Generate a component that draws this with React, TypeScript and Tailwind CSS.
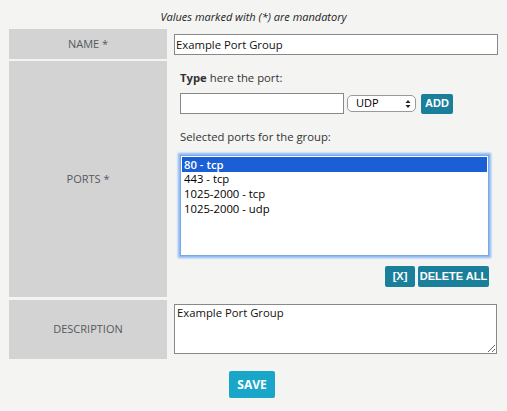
import React from 'react'

const ports = ['80 - tcp', '443 - tcp', '1025-2000 - tcp', '1025-2000 - udp']

function Label({ text, className }: { text: string; className: string }) {
  return (
    <div className={`flex items-center justify-center bg-[#d3d3d3] text-[11px] text-[#555a60] uppercase ${className}`}>
      {text}
    </div>
  )
}

export default function App() {
  return (
    <div className="min-h-[411px] w-[507px] bg-[#f4f4f3] font-['Open_Sans',sans-serif] text-[11.3px] text-[#222]">
      <p className="pt-[9px] h-[29px] text-center text-[11px] italic text-[#222]">
        Values marked with (*) are mandatory
      </p>

      <div className="ml-[9px] w-[489px] grid grid-cols-[158px_1fr] gap-y-[2px]">
        {/* Name */}
        <Label text="NAME *" className="h-[30px]" />
        <div className="flex items-center pl-[7px]">
          <input
            defaultValue="Example Port Group"
            className="w-[324px] h-[21px] border border-[#888] bg-white px-[1px] text-[11.3px] text-[#111] outline-none"
          />
        </div>

        {/* Ports */}
        <Label text="PORTS *" className="h-[236px]" />
        <div className="pl-[13px] pt-[9px]">
          <p className="h-[22px] text-[11.3px] text-[#333]">
            <span className="font-bold">Type</span> here the port:
          </p>
          <div className="flex items-center mt-[1px] h-[21px]">
            <input className="w-[164px] h-[21px] border border-[#888] bg-white outline-none" />
            <div className="ml-[3px] w-[69px] h-[17px] flex items-center justify-between rounded-[5px] border border-[#999] bg-white pl-[8px] pr-[4px] text-[11px] text-black">
              <span>UDP</span>
              <svg width="6" height="10" viewBox="0 0 6 10">
                <path d="M0.5 4 L3 1 L5.5 4 Z M0.5 6 L3 9 L5.5 6 Z" fill="#222" />
              </svg>
            </div>
            <button className="ml-[5px] w-[32px] h-[20px] rounded-[2px] bg-[#1a7f9b] font-['Liberation_Sans',sans-serif] text-[11px] font-bold text-white">
              ADD
            </button>
          </div>
          <p className="mt-[15px] h-[26px] text-[11.3px] text-[#333]">Selected ports for the group:</p>
          <div className="w-[309px] h-[101px] bg-white border border-[#7aa7e6] shadow-[0_0_2px_2px_#8ab8f5] pt-[1px] px-[1px]">
            {ports.map((p, i) => (
              <div
                key={p}
                className={`h-[14.7px] leading-[14px] pt-[0.5px] pl-[2px] text-[11.3px] ${
                  i === 0 ? 'bg-[#1a5fd6] text-white font-semibold' : 'text-black'
                }`}
              >
                {p}
              </div>
            ))}
          </div>
          <div className="w-[309px] flex justify-end gap-[3px] mt-[10px]">
            <button className="w-[30px] h-[21px] rounded-[2px] bg-[#1a7f9b] font-['Liberation_Sans',sans-serif] text-[11px] font-bold text-white">
              [X]
            </button>
            <button className="w-[71px] h-[21px] rounded-[2px] bg-[#1a7f9b] font-['Liberation_Sans',sans-serif] text-[11px] font-bold text-white">
              DELETE ALL
            </button>
          </div>
        </div>

        {/* Description */}
        <Label text="DESCRIPTION" className="h-[59px] mt-[1px]" />
        <div className="pl-[7px] pt-[4px] mt-[1px]">
          <textarea
            defaultValue="Example Port Group"
            className="block w-[323px] h-[50px] border border-[#888] bg-white px-[2px] py-0 text-[11.3px] text-[#111] outline-none"
          />
        </div>
      </div>

      <div className="flex justify-center mt-[12px] pr-[3px]">
        <button className="w-[46px] h-[27px] rounded-[2px] bg-[#1aa6c9] text-[12px] font-bold text-white">
          SAVE
        </button>
      </div>
    </div>
  )
}
